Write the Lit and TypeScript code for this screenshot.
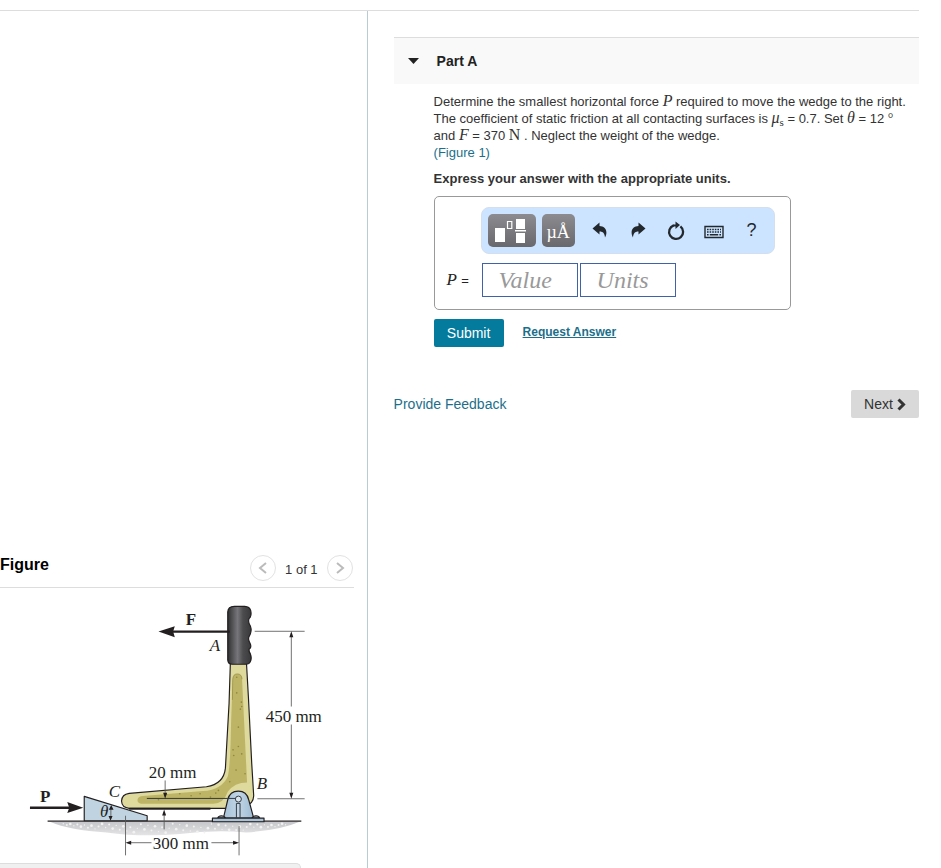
import { LitElement, html, css, svg } from "lit";
import { customElement } from "lit/decorators.js";

@customElement("lever-diagram")
class LeverDiagram extends LitElement {
  static styles = css`
    :host { display: block; }
    svg { display: block; width: 354px; max-width: 100%; height: auto; }
    .label { font: 17px "Liberation Serif", serif; fill: #231f20; }
    .italic { font-style: italic; }
    .bold { font-weight: bold; }
    .force { stroke: #231f20; stroke-width: 7; }
    .head { fill: #231f20; }
    .dim { stroke: #555; stroke-width: 2.5; fill: none; }
    .outline { stroke: #231f20; stroke-width: 3.5; stroke-linejoin: round; }
    .speck { fill: #f2f2f2; }
    .pit { fill: #918740; }
  `;

  render() {
    const specks = Array.from({ length: 64 }, (_, i) => {
      const x = 190 + i * 10.6;
      const depth = 30 * Math.sin(((x - 145) / 760) * Math.PI);
      return svg`<circle class="speck" cx=${x} cy=${702 + ((i * 17) % 31) * depth / 31} r=${2 + (i % 3)} />`;
    });
    const pits = [
      [711, 262], [711, 309], [725, 337], [722, 358], [726, 350], [716, 412], [716, 470],
      [702, 497], [726, 492], [700, 480], [709, 541], [736, 552], [690, 576], [656, 602],
      [601, 612], [574, 618], [632, 622], [648, 610], [476, 630], [500, 614], [540, 612],
    ];
    return html`
      <svg viewBox="0 0 354 270" role="img" aria-label="Lever ABC resting on a wedge">
        <defs>
          <linearGradient id="grip">
            <stop offset="0" stop-color="#2e2d2f" />
            <stop offset="0.15" stop-color="#4a494c" />
            <stop offset="0.42" stop-color="#77767a" />
            <stop offset="0.65" stop-color="#4c4b4e" />
            <stop offset="1" stop-color="#39383a" />
          </linearGradient>
          <linearGradient id="steel">
            <stop offset="0" stop-color="#a5c0d6" />
            <stop offset="0.5" stop-color="#c0d6e6" />
            <stop offset="1" stop-color="#9dbad2" />
          </linearGradient>
          <linearGradient id="soil" x1="0" y1="0" x2="0" y2="1">
            <stop offset="0" stop-color="#c6c7ca" />
            <stop offset="1" stop-color="#e4e4e6" />
          </linearGradient>
        </defs>
        <g transform="scale(0.33333)">
          <path fill="url(#soil)" d="M150 696H900Q840 722 740 728Q640 720 540 733Q420 742 320 728Q210 722 150 696Z" />
          ${specks}
          <path class="outline" d="M143 694H905" />
          <path class="outline" fill="#c0d3e0" d="M253 620L442 678V693H253Z" />
          <path class="outline" fill="#ded99c" d="M692 215H740L746 320L756 520L762 618Q761 642 738 648L700 656H388Q366 654 365 634Q366 614 388 611L620 591Q672 583 677 535L688 340Z" />
          <path fill="#bdb465" d="M699 268Q700 252 713 252Q726 252 727 268L742 578Q704 578 684 606Q672 642 640 642H424Q412 640 413 630Q415 619 430 619L610 604Q666 600 684 560Q692 530 694 400Z" />
          <path fill="none" stroke="#918740" stroke-width="2" d="M698 330L699 268Q700 252 713 252Q726 252 727 268" />
          ${pits.map(([x, y]) => svg`<circle class="pit" cx=${x} cy=${y} r="2.5" />`)}
          <path stroke="#231f20" stroke-width="6" d="M388 657H632" />
          <path class="outline" fill="url(#grip)" d="M684 66Q685 49 704 49H735Q750 50 753 62Q757 78 748 86Q744 96 752 108Q758 124 748 140Q744 148 751 160Q757 172 748 178Q747 184 752 192Q757 205 752 215Q749 223 738 223H697Q685 223 684 210Z" />
          <path class="outline" fill="url(#steel)" d="M671 685L684 630Q690 604 716 604Q741 604 747 630L762 685Z" />
          <path class="outline" fill="#8fa1ae" d="M654 685Q656 678 665 678Q674 678 677 685ZM757 685Q760 678 769 678Q778 678 780 685Z" />
          <path class="outline" fill="#a9c2d5" d="M638 685H793V696H638Z" />
          <path stroke="#333b42" stroke-width="3" fill="none" d="M710 685V641H721V685" />
          <path stroke="#333b42" stroke-width="3" d="M441 626H707" />
          <circle cx="716" cy="628" r="9" fill="#d9e6ef" stroke="#333b42" stroke-width="3" />

          <path class="force" d="M515 125H690M90 654H210" />
          <path class="head" d="M476 125L525 109L520 125L525 142ZM250 654L202 637L208 654L202 670Z" />

          <path class="dim" d="M765 124H915M773 627H915M875 130V350M875 404V620M377 678V797M718 709V797M384 759H455M635 759H710M496 572V618M493 668V719" />
          <path class="head" d="M875 124L869 142H881ZM875 627L869 609H881ZM377 759L394 753V765ZM718 759L700 753V765ZM496 627L490 609H502ZM493 659L487 677H499Z" />
          <path class="dim" d="M333 654V686" />
          <path class="head" d="M334 646L327 660H341ZM332 693L326 679H338Z" />
        </g>
        <text class="label bold" x="186" y="35">F</text>
        <text class="label bold" x="40" y="212">P</text>
        <text class="label italic" x="210" y="61">A</text>
        <text class="label italic" x="257" y="199">B</text>
        <text class="label italic" x="109" y="207">C</text>
        <text class="label italic" x="100" y="227">θ</text>
        <text class="label" x="266" y="132">450 mm</text>
        <text class="label" x="149" y="188">20 mm</text>
        <text class="label" x="153" y="259">300 mm</text>
      </svg>
    `;
  }
}

@customElement("figure-panel")
class FigurePanel extends LitElement {
  static styles = css`
    :host { display: flex; flex-direction: column; justify-content: flex-end; }
    .head {
      display: flex; align-items: center; justify-content: space-between;
      height: 38px; border-bottom: 1px solid #ddd; margin-bottom: 2px;
    }
    h2 { margin: 0 0 6px; font-size: 16px; line-height: 20px; color: #000; }
    .pager { display: flex; align-items: center; gap: 9px; padding-right: 1px; font-size: 13px; color: #333; }
    .count { padding-top: 2px; }
    button {
      display: grid; place-items: center; width: 26px; height: 26px; padding: 0;
      border: 1px solid #e2e2e2; border-radius: 50%; background: #fff;
    }
    path { fill: none; stroke: #bbb; stroke-width: 2; }
    .tray { width: 85%; height: 5px; margin-top: 3px; box-sizing: border-box; background: #f0f0f0; border: 1px solid #ddd; border-width: 1px 1px 0 0; border-radius: 0 5px 0 0; }
  `;

  render() {
    return html`
      <div class="head">
        <h2>Figure</h2>
        <div class="pager">
          <button aria-label="Previous figure"><svg width="12" height="12"><path d="M9 1L3 6L9 11" /></svg></button>
          <span class="count">1 of 1</span>
          <button aria-label="Next figure"><svg width="12" height="12"><path d="M3 1L9 6L3 11" /></svg></button>
        </div>
      </div>
      <lever-diagram></lever-diagram>
      <div class="tray"></div>
    `;
  }
}

@customElement("answer-box")
class AnswerBox extends LitElement {
  static styles = css`
    :host { display: block; max-width: 357px; }
    .box { display: grid; gap: 9px; padding: 10px 15px 12px 12px; border: 1px solid #999; border-radius: 5px; }
    .tools {
      display: flex; align-items: center; height: 47px; box-sizing: border-box; width: 294px;
      margin-left: 34px; padding: 0 0 0 6px; border: 1px solid #d3dfee; border-radius: 8px; background: #cce4ff;
    }
    button { flex: none; padding: 0; border: 0; background: none; font: 18px/33px "Liberation Sans", sans-serif; color: #22282e; }
    .tool { display: grid; place-items: center; width: 38px; height: 33px; }
    .dark {
      display: grid; place-items: center; width: 33px; height: 33px; margin-right: 6px;
      border-radius: 5px; background: linear-gradient(#8c8b90, #69686c); color: #fff;
      font: 18px/36px "Liberation Serif", serif;
    }
    .wide { width: 48px; }
    .row { display: flex; align-items: center; gap: 2px; }
    label.name { width: 33px; font: 17px "Liberation Serif", serif; color: #222; }
    .eq { font: 13px "Liberation Sans", sans-serif; }
    input {
      width: 96px; height: 34px; box-sizing: border-box; padding: 0 16px; border: 1px solid #3f62a8;
      border-radius: 0; background: #fff; font: italic 24px "Liberation Serif", serif; color: #333;
    }
    input::placeholder { color: #999; opacity: 1; }
    svg { display: block; }
  `;

  render() {
    return html`
      <div class="box">
        <div class="tools">
          <button class="dark wide" aria-label="Templates">
            <svg width="34" height="28" fill="#fff">
              <path d="M0 11H10V25H0ZM21 2H30V12H21ZM20 13H31V14.5H20ZM21 16H30V26H21Z" />
              <path d="M12.5 4.5H16.8V11.5H12.5Z" fill="none" stroke="#fff" stroke-width="1.2" />
            </svg>
          </button>
          <button class="dark" aria-label="Units">µÅ</button>
          <button class="tool" aria-label="Undo">
            <svg width="16" height="18" fill="#22282e"><path d="M.5 6.5L7.5 .5V4C13 4.4 16.5 8.5 13 15.6C12.8 11.5 11 9.4 7.5 9.5V12.5Z" /></svg>
          </button>
          <button class="tool" aria-label="Redo">
            <svg width="16" height="18" fill="#22282e"><path d="M15.5 6.5L8.5 .5V4C3 4.4 -.5 8.5 3 15.6C3.2 11.5 5 9.4 8.5 9.5V12.5Z" /></svg>
          </button>
          <button class="tool" aria-label="Reset">
            <svg width="18" height="20"><path d="M13.4 5.4A7 7 0 1 1 6.6 4.4" fill="none" stroke="#22282e" stroke-width="2.3" /><path d="M6 3.4H8.5V.5L13 4L8.5 8V5.6H6Z" fill="#22282e" /></svg>
          </button>
          <button class="tool" aria-label="Keyboard shortcuts">
            <svg width="20" height="16">
              <path d="M1 3.5H19V14.5H1Z" fill="none" stroke="#22282e" stroke-width="1.4" />
              <path d="M3 6.5H17M3 9H17" stroke="#22282e" stroke-width="1.5" stroke-dasharray="1.6 1" />
              <path d="M3 11.7H4.6M5.8 11.7H14.2M15.4 11.7H17" stroke="#22282e" stroke-width="1.5" />
            </svg>
          </button>
          <button class="tool" aria-label="Help">?</button>
        </div>
        <div class="row">
          <label class="name" for="value"><i>P</i> <span class="eq">=</span></label>
          <input id="value" placeholder="Value" />
          <input aria-label="Units" placeholder="Units" />
        </div>
      </div>
    `;
  }
}

@customElement("app-root")
class AppRoot extends LitElement {
  static styles = css`
    :host {
      display: flex; min-height: 100vh; box-sizing: border-box; padding: 10px 22px 0 0;
      background: #fff; font-family: "Liberation Sans", Arial, sans-serif; color: #333;
    }
    main { display: flex; flex: 1; border-top: 1px solid #ddd; }
    figure-panel { flex: 0 0 40%; box-sizing: border-box; padding-right: 13px; border-right: 1px solid #b9cbd5; }
    .question { flex: 1; padding: 26px 0 0 26px; font-size: 13px; line-height: 17px; }
    .part {
      display: flex; align-items: center; gap: 18px; height: 46px; padding-left: 14px;
      border-top: 1px solid #ddd; background: #f9f9f9;
    }
    h1 { margin: 0; font-size: 14px; line-height: 18px; color: #222; }
    .body { padding: 9px 0 0 40px; }
    p { margin: 0 0 9px; }
    .m { font: italic 16px/0 "Liberation Serif", serif; }
    .u { font-style: normal; }
    .deg { font: 14px/0 "Liberation Serif", serif; }
    .sub { font: 11px/0 "Liberation Serif", serif; vertical-align: -3px; }
    a { color: #1b6f8a; text-decoration: none; }
    .actions { display: flex; align-items: center; gap: 19px; margin-top: 9px; }
    button { height: 28px; border: 0; border-radius: 2px; font: 14px "Liberation Sans", Arial, sans-serif; }
    .submit { width: 70px; padding: 0; background: #047a9c; color: #fff; }
    .request { margin-bottom: 2px; font-size: 12px; font-weight: bold; text-decoration: underline; }
    .foot { display: flex; align-items: center; justify-content: space-between; margin-top: 43px; font-size: 14px; }
    .next { display: flex; align-items: center; justify-content: center; gap: 4px; width: 68px; padding: 0; background: #d9d9d9; color: #333; }
  `;

  render() {
    return html`
      <main>
        <figure-panel></figure-panel>
        <section class="question">
          <div class="part">
            <svg width="11" height="6" aria-hidden="true"><path d="M0 0H11L5.5 6Z" fill="#222" /></svg>
            <h1>Part A</h1>
          </div>
          <div class="body">
            <p>
              Determine the smallest horizontal force <span class="m">P</span> required to move the wedge to the right.<br />
              The coefficient of static friction at all contacting surfaces is <span class="m">μ</span><span class="sub">s</span> = 0.7. Set <span class="m">θ</span> = 12 <span class="deg">°</span><br />
              and <span class="m">F</span> = 370 <span class="m u">N</span> . Neglect the weight of the wedge.<br />
              <a href="#figure">(Figure 1)</a>
            </p>
            <p><b>Express your answer with the appropriate units.</b></p>
            <answer-box></answer-box>
            <div class="actions">
              <button class="submit">Submit</button>
              <a class="request" href="#answer">Request Answer</a>
            </div>
          </div>
          <div class="foot">
            <a href="#feedback">Provide Feedback</a>
            <button class="next">Next
              <svg width="9" height="13" aria-hidden="true"><path d="M1.5 1.5L6.5 6.5L1.5 11.5" fill="none" stroke="#333" stroke-width="3" /></svg>
            </button>
          </div>
        </section>
      </main>
    `;
  }
}
